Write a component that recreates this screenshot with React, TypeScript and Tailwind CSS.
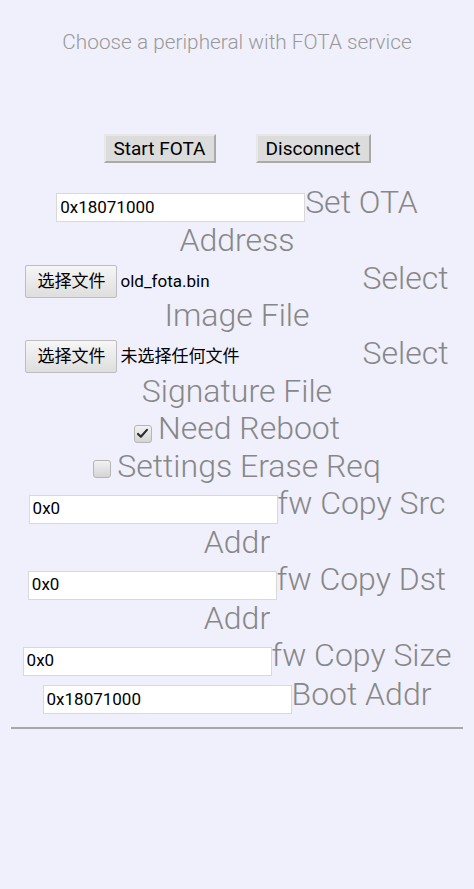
import { useState } from "react";

const font = "font-['Roboto','Noto_Sans_CJK_SC',sans-serif]";
const light = "font-['Roboto_Light','Roboto','Noto_Sans_CJK_SC',sans-serif]";

const AddrInput = ({ value }: { value: string }) => (
  <input
    readOnly
    value={value}
    className={`inline-block w-[249px] h-[29px] px-[3px] align-baseline bg-white border border-[#d9d9d9] text-[17px] font-normal text-black outline-none ${font}`}
  />
);

const FilePick = ({ name }: { name: string }) => (
  <span className={`inline-flex h-[22px] w-[337px] items-center align-[2px] text-left font-normal ${font}`}>
    <span className="inline-flex h-[33px] w-[92px] shrink-0 items-center justify-center rounded-[2px] border border-[#bdbdbd] bg-gradient-to-b from-[#f6f6f6] to-[#dedede] text-[17px] leading-none text-black">
      选择文件
    </span>
    <span className="ml-[3px] text-[17px] leading-none text-black">{name}</span>
  </span>
);

const Check = ({ on }: { on: boolean }) => (
  <span className="mr-[6px] inline-flex h-[18px] w-[18px] items-center justify-center rounded-[3px] border border-[#b5b5b5] bg-gradient-to-b from-[#f2f2f2] to-[#d4d4d4] align-[-1px]">
    {on ? (
      <svg viewBox="0 0 16 16" className="h-[13px] w-[13px]">
        <path d="M2.5 8.5 L6 12 L13.5 3.5" fill="none" stroke="#2a2a2a" strokeWidth="2.6" strokeLinecap="round" strokeLinejoin="round" />
      </svg>
    ) : null}
  </span>
);

const Row = ({ children }: { children: React.ReactNode }) => (
  <div className={`text-center text-[32px] font-light leading-[37.6px] text-[#878787] ${light}`}>{children}</div>
);

export default function App() {
  const [reboot] = useState(true);

  return (
    <div className={`min-h-[889px] w-full bg-[#f0f0fd] ${font}`}>
      <div className="px-[11px]">
        <h1 className={`pt-[30px] text-center text-[20.8px] font-light leading-[24px] text-[#999999] ${light}`}>
          Choose a peripheral with FOTA service
        </h1>
        <div className="mt-[80px] flex justify-center gap-[40px]">
          <button className="h-[29px] w-[112px] border-2 border-t-[#e8e8e8] border-l-[#e8e8e8] border-r-[#a9a9a9] border-b-[#a9a9a9] bg-[#dcdcdc] text-[19px] leading-none text-black">
            Start FOTA
          </button>
          <button className="h-[29px] w-[115px] border-2 border-t-[#e8e8e8] border-l-[#e8e8e8] border-r-[#a9a9a9] border-b-[#a9a9a9] bg-[#dcdcdc] text-[19px] leading-none text-black">
            Disconnect
          </button>
        </div>
        <div className="mt-[21px]">
          <Row>
            <AddrInput value="0x18071000" />Set OTA Address
          </Row>
          <Row>
            <FilePick name="old_fota.bin" />Select Image File
          </Row>
          <Row>
            <FilePick name="未选择任何文件" />Select Signature File
          </Row>
          <Row>
            <Check on={reboot} />Need Reboot
          </Row>
          <Row>
            <Check on={false} />Settings Erase Req
          </Row>
          <Row>
            <AddrInput value="0x0" />fw Copy Src Addr
          </Row>
          <Row>
            <AddrInput value="0x0" />fw Copy Dst Addr
          </Row>
          <Row>
            <AddrInput value="0x0" />fw Copy Size
          </Row>
          <Row>
            <AddrInput value="0x18071000" />Boot Addr
          </Row>
        </div>
        <hr className="mt-[13px] border-t-2 border-[#a8a8a8]" />
      </div>
    </div>
  );
}
